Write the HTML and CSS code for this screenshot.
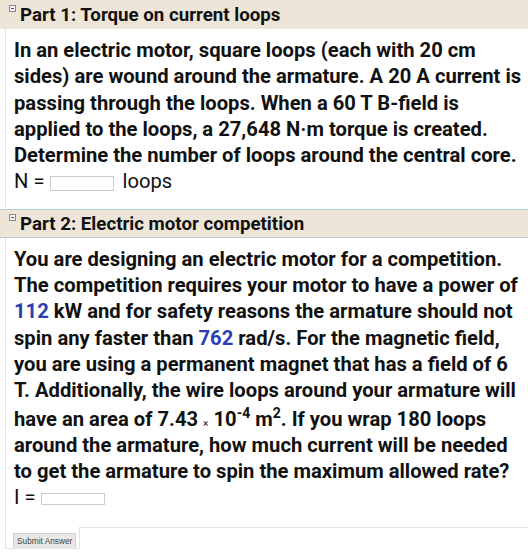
FILE: index.html
```html
<!DOCTYPE html>
<html>
<head>
<meta charset="utf-8">
<link rel="stylesheet" href="styles.css">
</head>
<body>
<div class="part part1">
  <div class="part-head"><span class="toggle"></span><span class="title">Part 1: Torque on current loops</span></div>
  <div class="part-body body1">
    <p class="q">In an electric motor, square loops (each with 20 cm sides) are wound around the armature. A 20 A current is passing through the loops. When a 60 T B-field is applied to the loops, a 27,648 N·m torque is created. Determine the number of loops around the central core.</p>
    <div class="ans">N = <span class="box box1"></span> loops</div>
  </div>
</div>
<div class="part part2">
  <div class="part-head bordered"><span class="toggle"></span><span class="title">Part 2: Electric motor competition</span></div>
  <div class="part-body body2">
    <p class="q">You are designing an electric motor for a competition. The competition requires your motor to have a power of <span class="num">112</span> kW and for safety reasons the armature should not spin any faster than <span class="num">762</span> rad/s. For the magnetic field, you are using a permanent magnet that has a field of 6 T. Additionally, the wire loops around your armature will have an area of 7.43 <span class="times">×</span> 10<sup>-4</sup> m<sup>2</sup>. If you wrap 180 loops around the armature, how much current will be needed to get the armature to spin the maximum allowed rate?</p>
    <div class="ans">I = <span class="box box2"></span></div>
  </div>
  <div class="submit-row">
    <div class="submit-tab"><button class="submit">Submit Answer</button></div>
    <div class="filler"></div>
  </div>
</div>
</body>
</html>
```

FILE: styles.css
```css
html, body {
  margin: 0;
  padding: 0;
  background: #ffffff;
}
body {
  font-family: Roboto, "Liberation Sans", sans-serif;
  color: #111111;
  width: 528px;
  overflow: hidden;
}
.part-head {
  height: 29px;
  background: #eee5d9;
  display: flex;
  align-items: center;
  position: relative;
  box-sizing: border-box;
}
.part-head.bordered {
  height: 29px;
  border-top: 1px solid #b3d0d2;
  border-bottom: 1px solid #b3d0d2;
}
.toggle {
  position: absolute;
  left: 9px;
  top: 5px;
  width: 5px;
  height: 5px;
  border: 1px solid #8a8a8a;
  background: #f6f6f6;
}
.part-head.bordered .toggle {
  top: 4px;
}
.toggle::after {
  content: "";
  position: absolute;
  left: 1px;
  right: 1px;
  top: 2px;
  height: 1px;
  background: #555555;
}
.title {
  margin-left: 20px;
  font-weight: 700;
  font-size: 18.7px;
  color: #111111;
}
.part-head.bordered .title {
  margin-top: 1px;
}
.part-body {
  margin-left: 5px;
  border-left: 1px solid #e2e2e2;
  padding-left: 8px;
  padding-right: 4px;
  font-size: 20.2px;
  line-height: 26.3px;
}
.body1 {
  padding-top: 8px;
  padding-bottom: 14px;
}
.body2 {
  padding-top: 8px;
  padding-bottom: 16px;
}
.q {
  margin: 0;
  font-weight: 700;
}
.num {
  color: #2a3db4;
}
.times {
  font-size: 10px;
  line-height: 0;
  font-weight: 400;
  vertical-align: -1px;
}
sup {
  font-size: 14px;
  line-height: 19px;
  vertical-align: 8px;
}
.ans {
  font-weight: 400;
  display: flex;
  align-items: center;
  white-space: pre;
}
.box {
  display: inline-block;
  box-sizing: border-box;
  border: 1px solid #cccccc;
  background: #ffffff;
}
.box1 {
  width: 64px;
  height: 15px;
  margin: 3px 4px 0 0;
}
.box2 {
  width: 64px;
  height: 12px;
  margin: 3px 0 0 0;
}
.submit-row {
  display: flex;
  margin-left: 5px;
}
.submit-tab {
  width: 75px;
  height: 22px;
  border-left: 1px solid #e2e2e2;
  border-right: 1px solid #e2e2e2;
  border-bottom: 1px solid #e2e2e2;
  padding: 2px 0 0 7px;
  box-sizing: border-box;
}
.filler {
  flex: 1;
  border-top: 1px solid #e2e2e2;
}
.submit {
  font-family: "Liberation Sans", Arial, sans-serif;
  font-size: 8.3px;
  color: #444444;
  background: #e8e8e8;
  border: 1px solid #d0d0d0;
  padding: 0 3px;
  height: 17px;
  line-height: 15px;
  white-space: nowrap;
}
```
